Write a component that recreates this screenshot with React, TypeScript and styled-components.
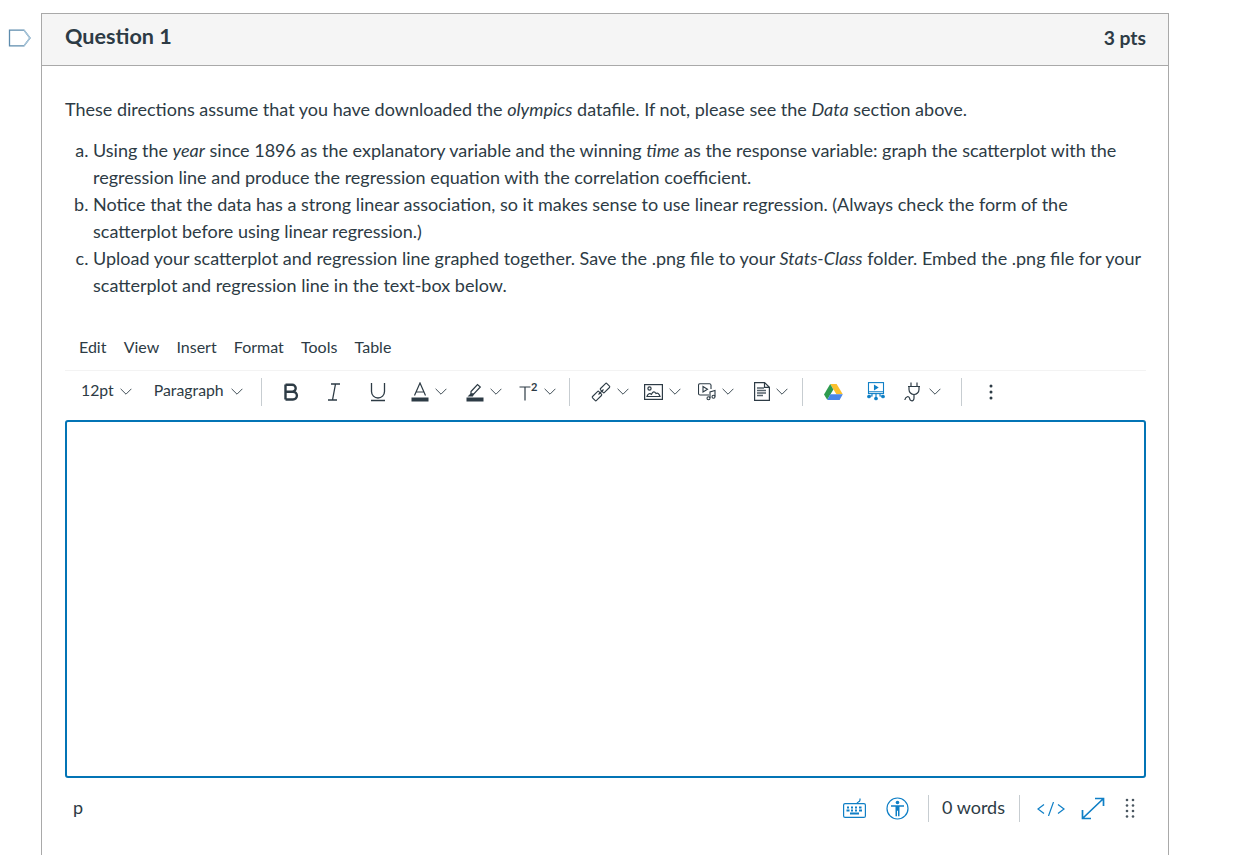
import React from "react";
import styled, { createGlobalStyle } from "styled-components";

const Global = createGlobalStyle`
  html, body { margin: 0; padding: 0; background: #fff; height: 855px; overflow: hidden; }
  body { font-family: Lato, "Open Sans", sans-serif; color: #2d3b45; }
`;

const Page = styled.div`
  display: flex;
  align-items: flex-start;
  padding: 13px 0 0 8px;
  height: 842px;
  overflow: hidden;
`;
const Marker = styled.svg`
  width: 24px;
  height: 18px;
  margin: 16px 9px 0 0;
  flex: none;
`;
const Card = styled.section`
  width: 1128px;
  height: 860px;
  flex: none;
  box-sizing: border-box;
  border: 1px solid #a9a9a9;
  border-bottom: 0;
`;
const Header = styled.header`
  height: 52px;
  box-sizing: border-box;
  background: #f5f5f5;
  border-bottom: 1px solid #a9a9a9;
  display: flex;
  justify-content: space-between;
  align-items: center;
  padding: 0 22px 5px 23px;
  font-weight: 700;
`;
const Title = styled.h2`
  margin: 0;
  font-size: 21.6px;
  font-weight: 700;
  line-height: 1;
`;
const Points = styled.span`
  font-size: 19.3px;
`;
const Body = styled.div`
  padding: 30px 22px 0 23px;
  font-size: 18px;
  line-height: 27px;
`;
const Para = styled.p`
  margin: 0 0 14px;
`;
const List = styled.ol`
  list-style: lower-alpha;
  margin: 0;
  padding: 0 0 0 28px;
`;
const Editor = styled.div`
  margin-top: 24px;
`;
const MenuBar = styled.div`
  display: flex;
  gap: 17.2px;
  height: 47px;
  padding-left: 14px;
  font-size: 16px;
  align-items: center;
  border-bottom: 1px solid #f3f3f3;
`;
const ToolBar = styled.div`
  display: flex;
  align-items: center;
  height: 41px;
  font-size: 15.8px;
`;
const Tool = styled.div<{ $at: number; $gap?: number }>`
  display: flex;
  align-items: center;
  margin-left: ${(p) => p.$at}px;
  flex: none;
  gap: ${(p) => p.$gap ?? 6}px;
`;
const ToolLabel = styled.span`
  margin-top: -5px;
`;
const Divider = styled.div<{ $at: number }>`
  width: 1px;
  height: 28px;
  background: #c7cdd1;
  margin-left: ${(p) => p.$at}px;
  flex: none;
`;
const EditArea = styled.div`
  height: 358px;
  box-sizing: border-box;
  margin-top: 8px;
  border: 2px solid #0374b5;
  border-radius: 3px;
`;
const StatusBar = styled.div`
  display: flex;
  align-items: center;
  height: 60px;
  font-size: 18px;
`;
const Path = styled.span`
  margin-left: 8px;
  margin-right: auto;
  font-size: 18px;
  padding-bottom: 2px;
`;
const StatusDivider = styled.div`
  width: 1px;
  height: 27px;
  background: #c7cdd1;
  flex: none;
`;
const WordCount = styled.span`
  margin: 0 14px 2px 13px;
  font-size: 18px;
`;
const Chevron = () => (
  <svg width="12" height="7" viewBox="0 0 12 7" fill="none" stroke="#2d3b45" strokeWidth="0.9">
    <path d="M.6.8 6 6.2 11.4.8" />
  </svg>
);

const Ic = styled.svg`
  display: block;
  flex: none;
`;

export default function App() {
  return (
    <>
      <Global />
      <Page>
        <Marker viewBox="0 0 24 18" fill="none">
          <path d="M1.500 1.200h14.500L22 9l-6 7.800H1.500z" stroke="#5d8cad" strokeWidth="1.300" />
          <path d="M16 1.200 22 9l-6 7.800" stroke="#a9c6da" strokeWidth="1.300" />
        </Marker>
        <Card>
          <Header>
            <Title>Question 1</Title>
            <Points>3 pts</Points>
          </Header>
          <Body>
            <Para>
              These directions assume that you have downloaded the <em>olympics</em> datafile. If not, please see the <em>Data</em> section above.
            </Para>
            <List>
              <li>Using the <em>year</em> since 1896 as the explanatory variable and the winning <em>time</em> as the response variable: graph the scatterplot with the regression line and produce the regression equation with the correlation coefficient.</li>
              <li>Notice that the data has a strong linear association, so it makes sense to use linear regression. (Always check the form of the scatterplot before using linear regression.)</li>
              <li>Upload your scatterplot and regression line graphed together. Save the .png file to your <em>Stats-Class</em> folder. Embed the .png file for your scatterplot and regression line in the text-box below.</li>
            </List>
            <Editor>
              <MenuBar>
                <span>Edit</span><span>View</span><span>Insert</span><span>Format</span><span>Tools</span><span>Table</span>
              </MenuBar>
              <ToolBar>
                <Tool $at={16}><ToolLabel>12pt</ToolLabel> <Chevron /></Tool>
                <Tool $at={22} $gap={7}><ToolLabel>Paragraph</ToolLabel> <Chevron /></Tool>
                <Divider $at={18} />
                <Tool $at={21}>
                  <Ic width="17" height="18" viewBox="0 0 17 18" fill="none" stroke="#2d3b45" strokeWidth="2.400">
                    <path d="M2.500 1.500v15M2.500 1.700h6.700a3.500 3.500 0 0 1 0 7H2.500M2.500 8.700h7.500a3.900 3.900 0 0 1 0 7.800H2.500" />
                  </Ic>
                </Tool>
                <Tool $at={27}>
                  <Ic width="14" height="18" viewBox="0 0 14 18" fill="none" stroke="#2d3b45" strokeWidth="1.300">
                    <path d="M4 1h9M1 17h9M8.500 1 5.500 17" />
                  </Ic>
                </Tool>
                <Tool $at={29}>
                  <Ic width="16" height="20" viewBox="0 0 16 20" fill="none" stroke="#2d3b45" strokeWidth="1.300">
                    <path d="M1.500 1v8.500a6.500 6.500 0 0 0 13 0V1M1 18.500h14" />
                  </Ic>
                </Tool>
                <Tool $at={25}>
                  <Ic width="18" height="20" viewBox="0 0 18 20" fill="none" stroke="#2d3b45" strokeWidth="1.200">
                    <path d="M3.500 13.500 9 1l5.500 12.500M5 10h8" />
                    <rect x="0.500" y="15.500" width="17" height="4" fill="#2d3b45" stroke="none" />
                  </Ic>
                  <Chevron />
                </Tool>
                <Tool $at={19}>
                  <Ic width="18" height="20" viewBox="0 0 18 20" fill="none" stroke="#2d3b45" strokeWidth="1.200">
                    <path d="M5 9.500 11.500 2.500l2.800 2.500-6.500 7H5z" />
                    <path d="M5 12 3 14h3.500l1-2z" fill="#2d3b45" />
                    <rect x="0.500" y="15.500" width="17" height="4" fill="#2d3b45" stroke="none" />
                  </Ic>
                  <Chevron />
                </Tool>
                <Tool $at={17}>
                  <Ic width="19" height="18" viewBox="0 0 19 18" fill="none" stroke="#2d3b45" strokeWidth="1.200">
                    <path d="M0.500 4h11M6 4v13.500" />
                    <text x="12" y="8" fontFamily="Lato, sans-serif" fontWeight="700" fontSize="11" fill="#2d3b45" stroke="none">2</text>
                  </Ic>
                  <Chevron />
                </Tool>
                <Divider $at={13} />
                <Tool $at={21}>
                  <Ic width="20" height="20" viewBox="0 0 20 20" fill="none" stroke="#2d3b45" strokeWidth="1.100">
                    <rect x="9.500" y="3.200" width="9" height="5.600" rx="1" transform="rotate(-45 14 6)" />
                    <rect x="1.500" y="11.200" width="9" height="5.600" rx="1" transform="rotate(-45 6 14)" />
                    <path d="m7.500 12.500 5-5" />
                  </Ic>
                  <Chevron />
                </Tool>
                <Tool $at={15}>
                  <Ic width="19" height="16" viewBox="0 0 19 16" fill="none" stroke="#2d3b45" strokeWidth="1.200">
                    <rect x="0.600" y="0.600" width="17.800" height="14.800" />
                    <circle cx="5.500" cy="4.500" r="1.600" />
                    <path d="M3 12.500c1-3 3-3.500 4.500-2.200 1.500-3 3-3 4.500-.8 1.500-.8 3-.4 4 3z" />
                  </Ic>
                  <Chevron />
                </Tool>
                <Tool $at={17}>
                  <Ic width="18" height="18" viewBox="0 0 18 18" fill="none" stroke="#2d3b45" strokeWidth="1.100">
                    <path d="M11 12H2a1.500 1.500 0 0 1-1.500-1.500V2A1.500 1.500 0 0 1 2 .8h9.500A1.500 1.500 0 0 1 13 2v4" />
                    <path d="M5 3.500v5.500l4.500-2.700z" />
                    <path d="M12 15V9l5-1.500v6" />
                    <circle cx="10.500" cy="15.300" r="1.500" />
                    <circle cx="15.500" cy="13.800" r="1.500" />
                  </Ic>
                  <Chevron />
                </Tool>
                <Tool $at={20}>
                  <Ic width="16" height="19" viewBox="0 0 16 19" fill="none" stroke="#2d3b45" strokeWidth="1.200">
                    <path d="M.6.6h10l4.800 4.600v13.200H.6zM10.500.6v4.700h4.900" />
                    <path d="M3 6h7M3 8.500h9M3 11h9M3 13.500h6" strokeWidth="1.600" stroke="#55626b" />
                  </Ic>
                  <Chevron />
                </Tool>
                <Divider $at={14} />
                <Tool $at={21}>
                  <Ic width="19" height="16" viewBox="0 0 19 16">
                    <path d="M6.200 0h6.400l6.200 10.300h-6.400z" fill="#fbc02d" />
                    <path d="M6.200 0 0 10.400l3.200 5.400 6.200-10.400z" fill="#2e9b4f" />
                    <path d="M6.300 10.300h12.500l-3.200 5.600H3.200z" fill="#4a86e8" />
                  </Ic>
                </Tool>
                <Tool $at={24}>
                  <Ic width="18" height="19" viewBox="0 0 18 19" fill="none" stroke="#0f7fc6" strokeWidth="1.100">
                    <rect x="1.500" y="0.600" width="15" height="11" />
                    <path d="M7.500 3.500v4l3.200-2z" fill="#0f7fc6" />
                    <path d="M1.500 9.800h15M5 11.500v2.500H2.500M9 11.500v4.500M13 11.500v2.500h2.500" />
                    <circle cx="2" cy="14.500" r="1.300" fill="#0f7fc6" />
                    <circle cx="9" cy="16.500" r="1.300" fill="#0f7fc6" />
                    <circle cx="16" cy="14.500" r="1.300" fill="#0f7fc6" />
                  </Ic>
                </Tool>
                <Tool $at={19} $gap={8}>
                  <Ic width="17" height="20" viewBox="0 0 17 20" fill="none" stroke="#2d3b45" strokeWidth="1.200">
                    <path d="M7 .5v4M13 .5v4M4 4.500h12M5 4.500v3a5 5 0 0 0 10 0v-3M10 12.500v3.500c0 4-4 3.500-4.500 0-.3-2-4-2-4.700 2" />
                  </Ic>
                  <Chevron />
                </Tool>
                <Divider $at={20} />
                <Tool $at={27}>
                  <Ic width="4" height="16" viewBox="0 0 4 16" fill="#2d3b45">
                    <circle cx="2" cy="2" r="1.500" />
                    <circle cx="2" cy="8" r="1.500" />
                    <circle cx="2" cy="14" r="1.500" />
                  </Ic>
                </Tool>
              </ToolBar>
              <EditArea />
              <StatusBar>
                <Path>p</Path>
                <Ic width="23" height="20" viewBox="0 0 23 20" fill="none" stroke="#0f7fc6" strokeWidth="1.200">
                  <rect x="0.600" y="5.600" width="21.800" height="13.800" rx="1.500" />
                  <path d="M14 5.500c0-2 3-1 3-3.500V.5" />
                  <path d="M4 9.500h2M8 9.500h2M12 9.500h2M16 9.500h2.500M3.500 12.500h3M8 12.500h2M12 12.500h2M16 12.500h3M7 15.500h9" strokeWidth="1.800" />
                </Ic>
                <Ic width="23" height="23" viewBox="0 0 23 23" fill="none" stroke="#0f7fc6" strokeWidth="1.200" style={{ margin: "0 19px 0 20px" }}>
                  <circle cx="11.500" cy="11.500" r="10.500" />
                  <circle cx="11.500" cy="5.500" r="1.800" fill="#0f7fc6" stroke="none" />
                  <path d="M5 8.200h13v1.500h-4.500v9.500h-1.500v-5.500h-1v5.500h-1.500V9.700H5z" fill="#0f7fc6" stroke="none" />
                </Ic>
                <StatusDivider />
                <WordCount>0 words</WordCount>
                <StatusDivider />
                <Ic width="28" height="14" viewBox="0 0 28 14" fill="none" stroke="#0f7fc6" strokeWidth="1.200" style={{ margin: "2px 16px 0 17px" }}>
                  <path d="M7 2.500 1 7l6 4.500M21 2.500 27 7l-6 4.500M16.500 0l-5 14" />
                </Ic>
                <Ic width="24" height="23" viewBox="0 0 24 23" fill="none" stroke="#0f7fc6" strokeWidth="1.700">
                  <path d="M2 21 22.500 1.500M14 1.500h8.500V9M1.500 13v8.500H10" />
                </Ic>
                <Ic width="10" height="21" viewBox="0 0 10 21" fill="#4a5660" style={{ margin: "1px 11px 0 20px" }}>
                  {[2, 7.5, 13, 18.5].flatMap((y) => [2, 8].map((x) => <circle key={`${x}-${y}`} cx={x} cy={y} r="1.300" />))}
                </Ic>
              </StatusBar>
            </Editor>
          </Body>
        </Card>
      </Page>
    </>
  );
}
